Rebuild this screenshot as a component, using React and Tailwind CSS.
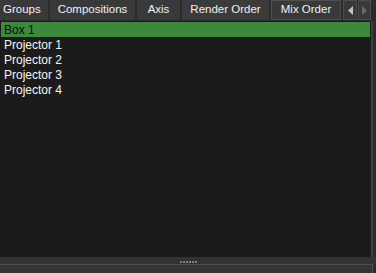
import { useState } from 'react'

const tabs = [
  { label: 'Groups', w: 'w-[48px] justify-start pl-[3px]' },
  { label: 'Compositions', w: 'w-[85px] justify-center' },
  { label: 'Axis', w: 'w-[43px] justify-center' },
  { label: 'Render Order', w: 'w-[87px] justify-center', active: true },
  { label: 'Mix Order', w: 'w-[70px] justify-center', hover: true },
]

const items = ['Box 1', 'Projector 1', 'Projector 2', 'Projector 3', 'Projector 4']

export default function App() {
  const [selected, setSelected] = useState(0)

  return (
    <div className="w-[376px] h-[273px] bg-[#2b2b2b] flex flex-col overflow-hidden text-[11px] leading-none" style={{ fontFamily: '"Liberation Sans", Arial, sans-serif' }}>
      {/* Tab strip */}
      <div className="flex h-[21px] shrink-0 gap-[2px]">
        {tabs.map((t) => (
          <div
            key={t.label}
            className={`${t.w} h-[20px] flex items-center text-[11.5px] text-[#eef2f6] ${
              t.active
                ? 'bg-[#3b3b3b]'
                : t.hover
                ? 'bg-[#393939] border border-[#505050]'
                : 'bg-[#393939]'
            }`}
          >
            {t.label}
          </div>
        ))}
        <div className="w-[14px] h-[20px] bg-[#393939] border border-[#4c4c4c] flex items-center justify-center">
          <svg width="5" height="9" viewBox="0 0 5 9"><path d="M5 0 L0 4.5 L5 9 Z" fill="#c4c4c4" /></svg>
        </div>
        <div className="w-[13px] h-[20px] -ml-[1px] bg-[#393939] border border-[#4c4c4c] flex items-center justify-center">
          <svg width="5" height="9" viewBox="0 0 5 9"><path d="M0 0 L5 4.5 L0 9 Z" fill="#6a6a6a" /></svg>
        </div>
      </div>

      {/* List panel */}
      <div className="flex-1 min-h-0 mr-[3px] bg-[#1b1b1b] border-r-2 border-[#404040] pt-[1px]">
        {items.map((it, i) => (
          <div
            key={it}
            onClick={() => setSelected(i)}
            className={`h-[15px] pl-[3px] mx-[1px] flex items-center text-[12px] ${
              selected === i ? 'bg-[#3d883d] text-[#0a0a0a]' : 'text-[#f6f6f6]'
            }`}
          >
            {it}
          </div>
        ))}
      </div>

      {/* Splitter */}
      <div className="h-[7px] shrink-0 flex items-center justify-center gap-[1px] bg-[#323232] pt-[2px]">
        {[0, 1, 2, 3, 4, 5].map((d) => (
          <div key={d} className="w-[2px] h-[2px] bg-[#808080]" />
        ))}
      </div>

      {/* Lower panel */}
      <div className="h-[9px] shrink-0 mr-[3px] bg-[#343434] border-t border-r border-[#505050]" />
    </div>
  )
}
